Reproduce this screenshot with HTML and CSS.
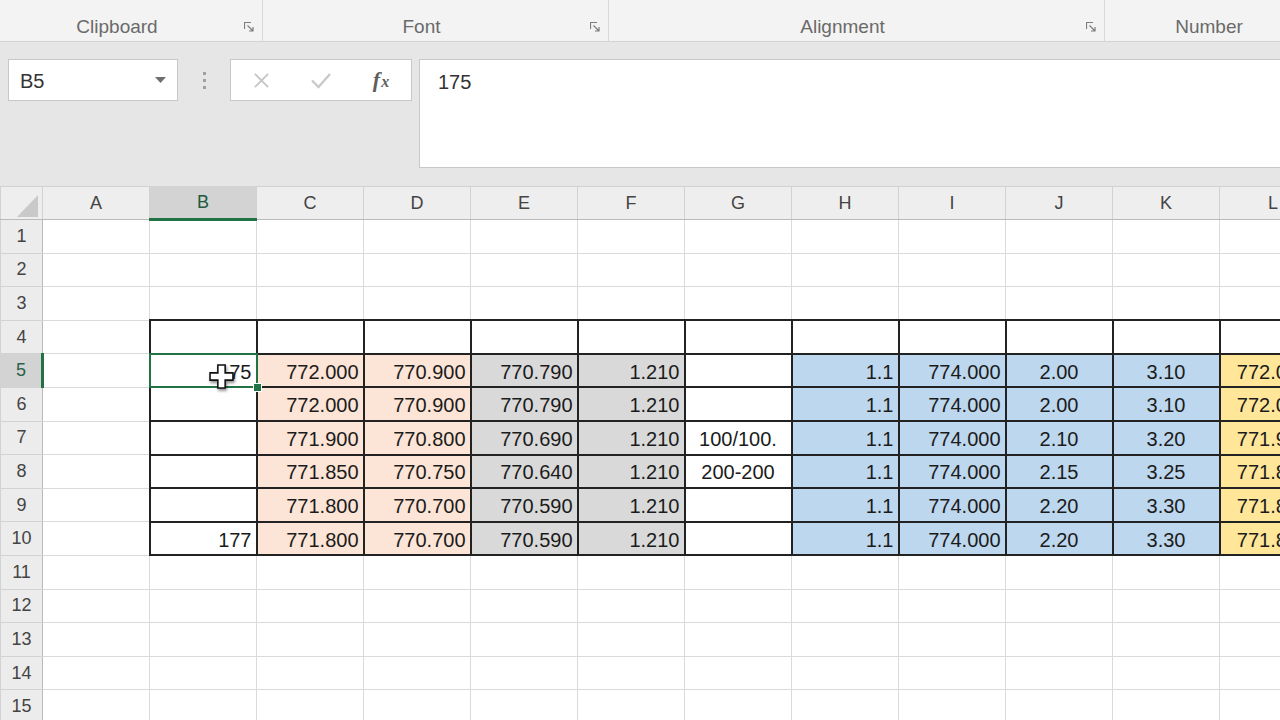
FILE: index.html
```html
<!DOCTYPE html>
<html lang="en">
<head>
<meta charset="utf-8">
<title>Excel sheet</title>
<link rel="stylesheet" href="styles.css">
</head>
<body>
<div class="ribbon">
  <div class="group g-clip"><span class="glabel">Clipboard</span><svg class="launch" viewBox="0 0 10 10"><path d="M0.5 7V0.5H7M3.5 3.5L9 9M9 5v4H5" /></svg></div>
  <div class="group g-font"><span class="glabel">Font</span><svg class="launch" viewBox="0 0 10 10"><path d="M0.5 7V0.5H7M3.5 3.5L9 9M9 5v4H5" /></svg></div>
  <div class="group g-align"><span class="glabel">Alignment</span><svg class="launch" viewBox="0 0 10 10"><path d="M0.5 7V0.5H7M3.5 3.5L9 9M9 5v4H5" /></svg></div>
  <div class="group g-num"><span class="glabel">Number</span></div>
</div>

<div class="fbar">
  <div class="namebox"><span>B5</span><svg class="dd" viewBox="0 0 11 6"><path d="M0 0h11L5.5 6z"/></svg></div>
  <div class="grip"><i></i><i></i><i></i></div>
  <div class="fbtns">
    <span><svg class="ico-x" viewBox="0 0 18 18"><path d="M2 2L16 16M16 2L2 16"/></svg></span>
    <span><svg class="ico-ok" viewBox="0 0 22 18"><path d="M2 9.5l6.5 6.5L20 3"/></svg></span>
    <span class="fx"><i>f</i><i class="sub">x</i></span>
  </div>
  <div class="finput">175</div>
</div>

<div class="sheet">
<table class="grid">
  <colgroup>
    <col class="c-rh"><col><col><col><col><col><col><col><col><col><col><col><col>
  </colgroup>
  <tr class="hrow">
    <th class="corner"><svg viewBox="0 0 21 22"><polygon points="21,0 21,22 0,22"/></svg></th>
    <th>A</th><th class="csel">B</th><th>C</th><th>D</th><th>E</th><th>F</th><th>G</th><th>H</th><th>I</th><th>J</th><th>K</th><th>L</th>
  </tr>
  <tr><th class="rh">1</th><td></td><td></td><td></td><td></td><td></td><td></td><td></td><td></td><td></td><td></td><td></td><td></td></tr>
  <tr><th class="rh">2</th><td></td><td></td><td></td><td></td><td></td><td></td><td></td><td></td><td></td><td></td><td></td><td></td></tr>
  <tr><th class="rh">3</th><td></td><td></td><td></td><td></td><td></td><td></td><td></td><td></td><td></td><td></td><td></td><td></td></tr>
  <tr><th class="rh">4</th><td></td><td class="b"></td><td class="b"></td><td class="b"></td><td class="b"></td><td class="b"></td><td class="b"></td><td class="b"></td><td class="b"></td><td class="b"></td><td class="b"></td><td class="b"></td></tr>
  <tr><th class="rh rsel">5</th><td></td>
    <td class="b active">175<span class="selbox"></span><span class="handle"></span><svg class="cursor" viewBox="0 0 24 24"><polygon points="8.5,1 15.5,1 15.5,8.5 23,8.5 23,15.5 15.5,15.5 15.5,23 8.5,23 8.5,15.5 1,15.5 1,8.5 8.5,8.5"/></svg></td>
    <td class="b pe">772.000</td><td class="b pe">770.900</td><td class="b gy">770.790</td><td class="b gy">1.210</td><td class="b"></td><td class="b bl">1.1</td><td class="b bl">774.000</td><td class="b bl ctr">2.00</td><td class="b bl ctr">3.10</td><td class="b ye ctr">772.000</td></tr>
  <tr><th class="rh">6</th><td></td><td class="b"></td><td class="b pe">772.000</td><td class="b pe">770.900</td><td class="b gy">770.790</td><td class="b gy">1.210</td><td class="b"></td><td class="b bl">1.1</td><td class="b bl">774.000</td><td class="b bl ctr">2.00</td><td class="b bl ctr">3.10</td><td class="b ye ctr">772.000</td></tr>
  <tr><th class="rh">7</th><td></td><td class="b"></td><td class="b pe">771.900</td><td class="b pe">770.800</td><td class="b gy">770.690</td><td class="b gy">1.210</td><td class="b ctr">100/100.</td><td class="b bl">1.1</td><td class="b bl">774.000</td><td class="b bl ctr">2.10</td><td class="b bl ctr">3.20</td><td class="b ye ctr">771.900</td></tr>
  <tr><th class="rh">8</th><td></td><td class="b"></td><td class="b pe">771.850</td><td class="b pe">770.750</td><td class="b gy">770.640</td><td class="b gy">1.210</td><td class="b ctr">200-200</td><td class="b bl">1.1</td><td class="b bl">774.000</td><td class="b bl ctr">2.15</td><td class="b bl ctr">3.25</td><td class="b ye ctr">771.850</td></tr>
  <tr><th class="rh">9</th><td></td><td class="b"></td><td class="b pe">771.800</td><td class="b pe">770.700</td><td class="b gy">770.590</td><td class="b gy">1.210</td><td class="b"></td><td class="b bl">1.1</td><td class="b bl">774.000</td><td class="b bl ctr">2.20</td><td class="b bl ctr">3.30</td><td class="b ye ctr">771.800</td></tr>
  <tr><th class="rh">10</th><td></td><td class="b">177</td><td class="b pe">771.800</td><td class="b pe">770.700</td><td class="b gy">770.590</td><td class="b gy">1.210</td><td class="b"></td><td class="b bl">1.1</td><td class="b bl">774.000</td><td class="b bl ctr">2.20</td><td class="b bl ctr">3.30</td><td class="b ye ctr">771.800</td></tr>
  <tr><th class="rh">11</th><td></td><td></td><td></td><td></td><td></td><td></td><td></td><td></td><td></td><td></td><td></td><td></td></tr>
  <tr><th class="rh">12</th><td></td><td></td><td></td><td></td><td></td><td></td><td></td><td></td><td></td><td></td><td></td><td></td></tr>
  <tr><th class="rh">13</th><td></td><td></td><td></td><td></td><td></td><td></td><td></td><td></td><td></td><td></td><td></td><td></td></tr>
  <tr><th class="rh">14</th><td></td><td></td><td></td><td></td><td></td><td></td><td></td><td></td><td></td><td></td><td></td><td></td></tr>
  <tr><th class="rh">15</th><td></td><td></td><td></td><td></td><td></td><td></td><td></td><td></td><td></td><td></td><td></td><td></td></tr>
</table>
</div>
</body>
</html>
```

FILE: styles.css
```css
html, body {
  margin: 0;
  padding: 0;
}
body {
  width: 1280px;
  height: 720px;
  overflow: hidden;
  background: #e6e6e6;
  font-family: "Liberation Sans", Arial, sans-serif;
}

/* Ribbon group labels */
.ribbon {
  display: flex;
  height: 41px;
  background: #f3f3f3;
  border-bottom: 1px solid #d4d4d4;
  overflow: hidden;
}
.group {
  flex: none;
  display: flex;
  align-items: center;
  padding-top: 13px;
  box-sizing: border-box;
  border-right: 1px solid #d8d8d8;
}
.g-clip { width: 263px; }
.g-font { width: 346px; }
.g-align { width: 496px; }
.g-num { width: 208px; border-right: none; }
.glabel {
  flex: 1;
  text-align: center;
  font-size: 19px;
  color: #6a6a6a;
}
.launch {
  width: 10px;
  height: 10px;
  margin: 0 8px 0 10px;
  fill: none;
  stroke: #7d7d7d;
  stroke-width: 1.2;
}

/* Formula bar */
.fbar {
  display: flex;
  align-items: flex-start;
  padding: 17px 0 18px 8px;
  background: #e6e6e6;
}
.namebox {
  width: 170px;
  height: 42px;
  box-sizing: border-box;
  border: 1px solid #c8c8c8;
  background: #fff;
  display: flex;
  align-items: center;
  justify-content: space-between;
  padding: 2px 11px 0 11px;
  font-size: 20px;
  color: #333;
}
.dd {
  width: 11px;
  height: 6px;
  fill: #6f6f6f;
  margin-top: -2px;
}
.grip {
  width: 52px;
  height: 42px;
  display: flex;
  flex-direction: column;
  align-items: center;
  justify-content: center;
  gap: 4px;
}
.grip i {
  width: 3px;
  height: 3px;
  background: #a0a0a0;
  display: block;
}
.fbtns {
  width: 182px;
  height: 42px;
  box-sizing: border-box;
  border: 1px solid #c8c8c8;
  background: #fff;
  display: flex;
  align-items: center;
}
.fbtns span {
  width: 60px;
  display: flex;
  justify-content: center;
  align-items: center;
}
.ico-x {
  width: 17px;
  height: 17px;
  fill: none;
  stroke: #c6c6c6;
  stroke-width: 2;
}
.ico-ok {
  width: 22px;
  height: 18px;
  fill: none;
  stroke: #c9c9c9;
  stroke-width: 2.4;
}
.fbtns span.fx {
  align-items: baseline;
  font-family: "Liberation Serif", "Times New Roman", serif;
  font-weight: bold;
  color: #5e5e5e;
  font-size: 22px;
  line-height: 1;
}
.fx .sub {
  font-size: 16px;
  margin-left: 1px;
}
.finput {
  flex: 1;
  margin-left: 7px;
  height: 109px;
  box-sizing: border-box;
  border: 1px solid #c8c8c8;
  border-right: none;
  background: #fff;
  padding: 10px 0 0 18px;
  font-size: 20px;
  color: #333;
  line-height: 24px;
}

/* Sheet grid */
.sheet {
  width: 1280px;
  overflow: hidden;
}
.grid {
  border-collapse: collapse;
  table-layout: fixed;
  width: 1326px;
}
.grid col { width: 107px; }
.grid col.c-rh { width: 42px; }
.grid tr { height: 33.6px; }
.grid tr.hrow { height: 33px; }

.grid th {
  background: #ececec;
  font-weight: normal;
  font-size: 18px;
  color: #444;
  border: 1px solid #d2d2d2;
  padding: 0;
  text-align: center;
  vertical-align: middle;
}
.hrow th {
  border-bottom: 1px solid #bababa;
  background: #eeeeee;
}
.grid th.rh {
  border-right: 1px solid #bababa;
}
.grid th.corner {
  vertical-align: bottom;
  padding: 0 5px 2px 16px;
}
.corner svg {
  display: block;
  width: 21px;
  height: 22px;
  fill: #c9c9c9;
}
.grid th.csel {
  background: #d3d3d3;
  color: #1f5a40;
  border-bottom: 3px solid #217346;
}
.grid th.rsel {
  background: #d3d3d3;
  color: #2b6049;
  border-right: 3px solid #217346;
}

.grid td {
  background: #fff;
  border: 1px solid #dadada;
  padding: 2px 4px 0 4px;
  font-size: 20px;
  line-height: 1;
  color: #1b1b1b;
  text-align: right;
  white-space: nowrap;
  vertical-align: middle;
}
.grid td.b { border: 2px solid #222; }
.grid td.ctr { text-align: center; }
.grid td.pe { background: #fce4d6; }
.grid td.gy { background: #d9d9d9; }
.grid td.bl { background: #bdd7ee; }
.grid td.ye { background: #ffe699; }

/* Active cell overlay */
.grid td.active {
  position: relative;
}
.selbox {
  position: absolute;
  left: -2px;
  top: -2px;
  right: -2px;
  bottom: -2px;
  border: 2px solid #217346;
}
.handle {
  position: absolute;
  right: -6px;
  bottom: -6px;
  width: 7px;
  height: 7px;
  background: #217346;
  border: 1px solid #fff;
}
.cursor {
  position: absolute;
  left: 58px;
  top: 9px;
  width: 25px;
  height: 25px;
  fill: #fff;
  stroke: #111;
  stroke-width: 1.5;
  filter: drop-shadow(1px 2px 1.5px rgba(0, 0, 0, 0.45));
}
```
